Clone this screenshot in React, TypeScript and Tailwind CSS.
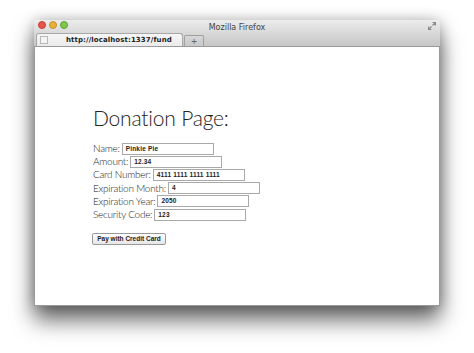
import React from 'react';

const fields = [
  { label: 'Name:', value: 'Pinkie Pie' },
  { label: 'Amount:', value: '12.34' },
  { label: 'Card Number:', value: '4111 1111 1111 1111' },
  { label: 'Expiration Month:', value: '4' },
  { label: 'Expiration Year:', value: '2050' },
  { label: 'Security Code:', value: '123' },
];

const App: React.FC = () => {
  return (
    <div className="w-[474px] h-[353px] bg-white overflow-hidden pt-[20px] pl-[34px]">
      {/* Window */}
      <div className="w-[406px] h-[286px] flex flex-col rounded-t-[4px] shadow-[0_14px_22px_rgba(0,0,0,0.6),0_0_14px_rgba(0,0,0,0.25)] bg-white">
        {/* Title bar */}
        <div className="relative h-[12px] rounded-t-[4px] bg-gradient-to-b from-[#ececec] to-[#dadada] flex items-center justify-center">
          <div className="absolute left-[4px] top-[1px] flex gap-[3px]">
            <span className="w-[8px] h-[8px] rounded-full bg-[#e8534c] border border-[#c0413b]" />
            <span className="w-[8px] h-[8px] rounded-full bg-[#e9b13b] border border-[#c4902b]" />
            <span className="w-[8px] h-[8px] rounded-full bg-[#7fc64c] border border-[#5ea23a]" />
          </div>
          <span className="text-[8px] text-[#444] leading-none mt-[4px] font-['Lucida_Grande','DejaVu_Sans',sans-serif]">
            Mozilla Firefox
          </span>
          <svg className="absolute right-[4px] top-[2px]" width="8" height="8" viewBox="0 0 8 8">
            <path d="M4.5 0.5h3v3M7.5 0.5L4.5 3.5M3.5 7.5h-3v-3M0.5 7.5L3.5 4.5" stroke="#8a8a8a" strokeWidth="1.2" fill="none" />
          </svg>
        </div>
        {/* Tab bar */}
        <div className="h-[15px] bg-gradient-to-b from-[#dadada] to-[#c6c6c6] border-b border-[#9a9a9a] flex items-end pl-[2px]">
          <div className="w-[147px] h-[13px] bg-gradient-to-b from-[#f6f6f6] to-[#ebebeb] border border-b-0 border-[#a8a8a8] rounded-t-[3px] flex items-center px-[3px] gap-[18px]">
            <span className="w-[8px] h-[8px] border border-[#b8b8b8] bg-[#f4f4f4]" />
            <span className="text-[7px] font-bold text-[#222] font-['DejaVu_Sans',sans-serif] tracking-[0.1px]">
              http://localhost:1337/fund
            </span>
          </div>
          <div className="w-[20px] h-[11px] ml-[1px] bg-gradient-to-b from-[#d8d8d8] to-[#c8c8c8] border border-b-0 border-[#a0a0a0] rounded-t-[2px] flex items-center justify-center text-[10px] leading-none text-[#666]">
            +
          </div>
        </div>
        {/* Content */}
        <div className="flex-1 bg-white border-x border-b border-[#9a9a9a] pl-[58px] pt-[60px] font-['Lato',sans-serif] text-[#222]">
          <h1 className="text-[21px] font-light leading-none tracking-[-0.2px]">Donation Page:</h1>
          <div className="mt-[14px] flex flex-col">
            {fields.map((f) => (
              <div key={f.label} className="h-[13.2px] flex items-center gap-[2px] text-[10px] font-light tracking-[-0.25px] whitespace-nowrap">
                <span>{f.label}</span>
                <span className="w-[92px] h-[12px] border border-[#a9a9a9] bg-white flex items-center px-[3px] text-[6.5px] font-bold tracking-[0.2px] text-[#222] font-['Liberation_Sans',sans-serif]">
                  {f.value}
                </span>
              </div>
            ))}
          </div>
          <button className="mt-[12px] -ml-[1px] w-[74px] h-[12px] border border-[#9a9a9a] rounded-[2px] bg-gradient-to-b from-[#ffffff] to-[#e6e6e6] text-[6.5px] font-bold text-[#222] font-['Liberation_Sans',sans-serif] leading-none whitespace-nowrap">
            Pay with Credit Card
          </button>
        </div>
      </div>
    </div>
  );
};

export default App;
